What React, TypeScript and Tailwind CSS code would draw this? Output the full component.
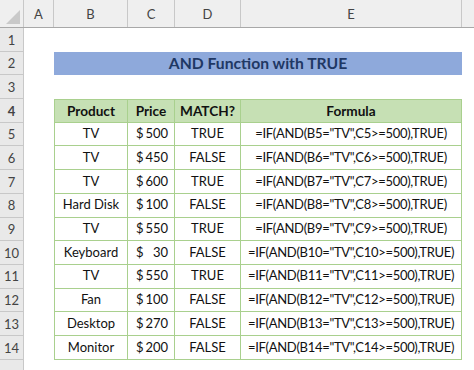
import React from "react";

const rows = [
  ["TV", "500", "TRUE"],
  ["TV", "450", "FALSE"],
  ["TV", "600", "TRUE"],
  ["Hard Disk", "100", "FALSE"],
  ["TV", "550", "TRUE"],
  ["Keyboard", "30", "FALSE"],
  ["TV", "550", "TRUE"],
  ["Fan", "100", "FALSE"],
  ["Desktop", "270", "FALSE"],
  ["Monitor", "200", "FALSE"],
];

const cols = "grid grid-cols-[24px_30px_74px_47px_66px_221px_12px]";
const cell = "min-w-0 overflow-hidden whitespace-nowrap flex items-center";

function RowHead({ n }: { n: number | string }) {
  return (
    <div className="flex items-center justify-center bg-[#e9e9e9] border-r border-b border-[#c8c8c8] text-[13px] text-[#444] pt-[2px]">
      {n}
    </div>
  );
}

export default function App() {
  return (
    <div
      className="w-[474px] h-[370px] overflow-hidden bg-white flex flex-col"
      style={{ fontFamily: "Lato, 'Open Sans', sans-serif" }}
    >
      {/* column headers */}
      <div className={`${cols} h-[28px] shrink-0 bg-[#efefef] border-b border-[#a8a8a8] text-[13px] text-[#444]`}>
        <div className="relative border-r border-[#c8c8c8]">
          <div className="absolute right-[3px] bottom-[3px] w-0 h-0 border-l-[14px] border-l-transparent border-b-[14px] border-b-[#c9c9c9]" />
        </div>
        {["A", "B", "C", "D", "E"].map((c) => (
          <div key={c} className="flex items-center justify-center border-r border-[#c8c8c8] pt-[2px]">
            {c}
          </div>
        ))}
        <div />
      </div>

      {/* row 1 */}
      <div className={`${cols} h-[23.7px] shrink-0`}>
        <RowHead n={1} />
      </div>
      {/* row 2 title */}
      <div className={`${cols} h-[23.7px] shrink-0`}>
        <RowHead n={2} />
        <div />
        <div className={`${cell} col-span-4 bg-[#8ea9db] justify-center text-[#1f3864] font-bold text-[15.7px]`}>
          AND Function with TRUE
        </div>
      </div>
      {/* row 3 */}
      <div className={`${cols} h-[23.7px] shrink-0`}>
        <RowHead n={3} />
      </div>
      {/* row 4 header */}
      <div className={`${cols} h-[23.7px] shrink-0 text-[13.6px] font-bold text-[#111]`}>
        <RowHead n={4} />
        <div />
        <div className={`${cell} bg-[#c6e0b4] border border-[#a9d08e] justify-center`}>Product</div>
        <div className={`${cell} bg-[#c6e0b4] border-t border-r border-b border-[#a9d08e] justify-center`}>Price</div>
        <div className={`${cell} bg-[#c6e0b4] border-t border-r border-b border-[#a9d08e] justify-center`}>MATCH?</div>
        <div className={`${cell} bg-[#c6e0b4] border-t border-r border-b border-[#a9d08e] justify-center`}>Formula</div>
      </div>
      {rows.map(([p, price, m], i) => {
        const r = i + 5;
        return (
          <div key={r} className={`${cols} h-[23.7px] shrink-0 text-[13px] text-[#111]`}>
            <RowHead n={r} />
            <div />
            <div className={`${cell} border-l border-r border-b border-[#a9d08e] justify-center`}>{p}</div>
            <div className={`${cell} border-r border-b border-[#a9d08e] justify-between pl-[8px] pr-[6px]`}>
              <span>$</span>
              <span>{price}</span>
            </div>
            <div className={`${cell} border-r border-b border-[#a9d08e] justify-center`}>{m}</div>
            <div className={`${cell} border-r border-b border-[#a9d08e] justify-center tracking-[-0.3px]`}>
              {`=IF(AND(B${r}="TV",C${r}>=500),TRUE)`}
            </div>
          </div>
        );
      })}
      {/* row 15 partial */}
      <div className={`${cols} flex-1`}>
        <div className="bg-[#e9e9e9] border-r border-[#c8c8c8]" />
      </div>
    </div>
  );
}
